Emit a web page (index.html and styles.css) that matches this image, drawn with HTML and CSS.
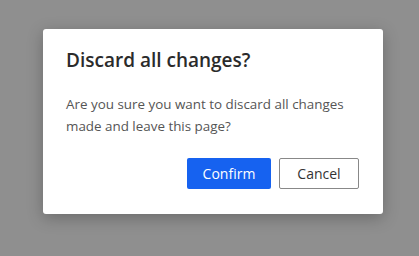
FILE: index.html
```html
<!DOCTYPE html>
<html lang="en">
<head>
  <meta charset="UTF-8" />
  <meta name="viewport" content="width=device-width, initial-scale=1.0" />
  <title>Discard changes</title>
  <link rel="stylesheet" href="styles.css">
</head>
<body>
  <div class="overlay">
    <div class="dialog">
      <h2>Discard all changes?</h2>
      <p>Are you sure you want to discard all changes made and leave this page?</p>
      <div class="dialog-buttons">
        <button class="confirm-btn">Confirm</button>
        <button class="cancel-btn">Cancel</button>
      </div>
    </div>
  </div>
</body>
</html>
```

FILE: styles.css
```css
* { box-sizing: border-box; margin: 0; padding: 0; }
body {
  font-family: "Open Sans", "Noto Sans", sans-serif;
  background: #8f8f8f;
  color: #333;
}
.overlay {
  width: 419px;
  height: 256px;
  padding: 29px 36px 0 43px;
}
.dialog {
  width: 340px;
  height: 185px;
  background: #fff;
  border-radius: 3px;
  padding: 18px 24px 0 23px;
  box-shadow: 0 4px 16px rgba(0,0,0,0.25);
}
h2 {
  font-size: 19px;
  font-weight: 600;
  color: #2b2b2b;
  line-height: 26px;
}
p {
  margin-top: 20px;
  font-size: 13.4px;
  line-height: 22px;
  color: #555;
}
.dialog-buttons {
  margin-top: 21px;
  display: flex;
  justify-content: flex-end;
  gap: 8px;
}
.dialog-buttons button {
  height: 31px;
  font-family: inherit;
  font-size: 14px;
  border-radius: 2px;
  cursor: pointer;
}
.confirm-btn {
  width: 84px;
  background: #1662f0;
  border: none;
  color: #fff;
}
.cancel-btn {
  width: 80px;
  background: #fff;
  border: 1px solid #888;
  color: #333;
}
```
